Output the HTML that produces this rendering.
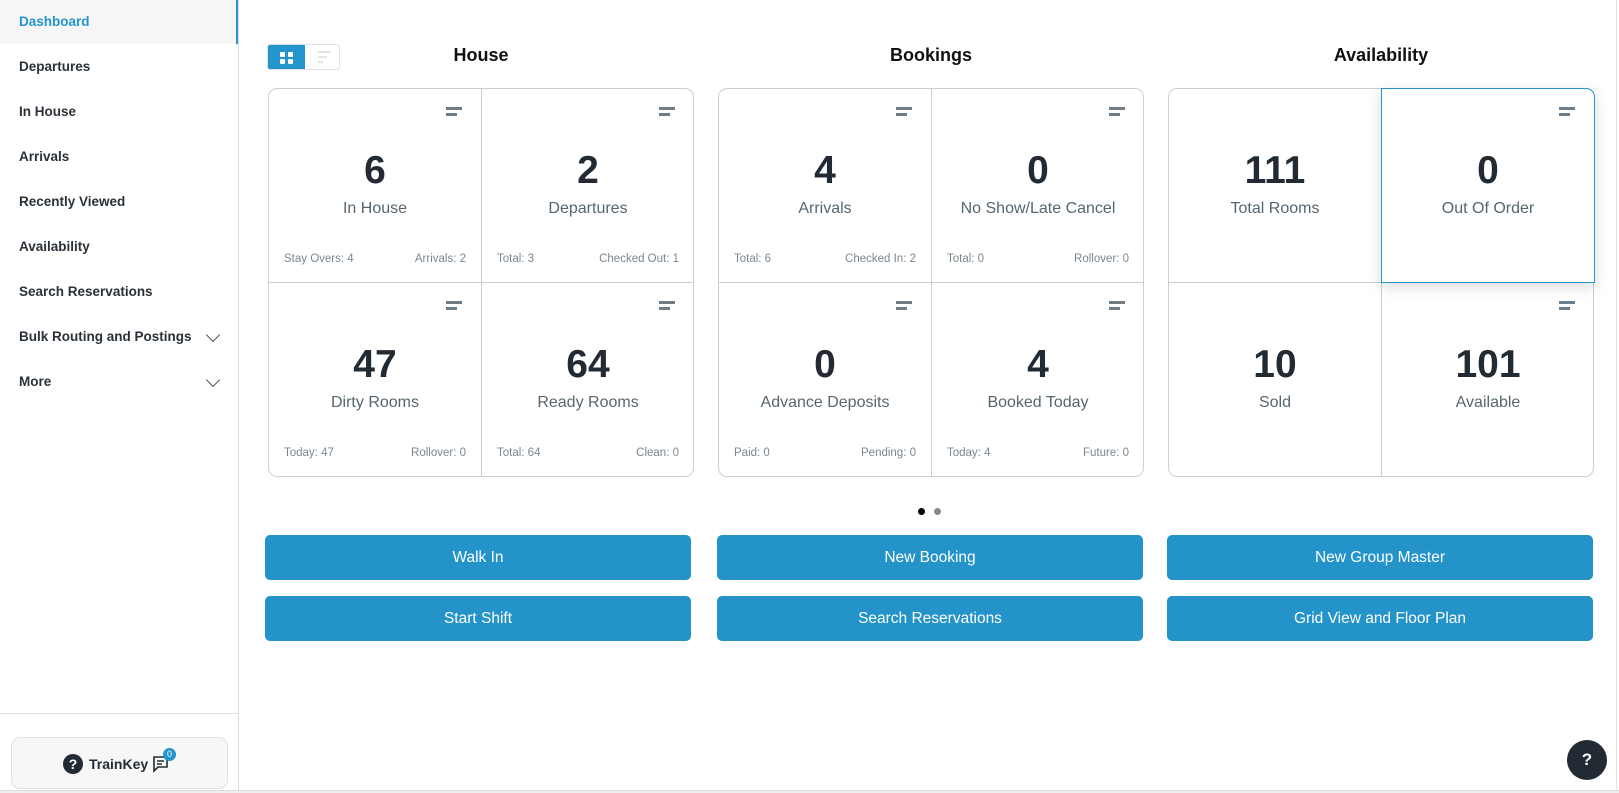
<!DOCTYPE html>
<html><head><meta charset="utf-8"><style>
*{box-sizing:border-box;margin:0;padding:0}
body{width:1619px;height:793px;overflow:hidden;background:#fff;font-family:"Liberation Sans",sans-serif;position:relative;color:#222b33}
.sb{position:absolute;left:0;top:0;width:239px;height:793px;border-right:1px solid #dcdfe2}
.it{position:absolute;left:0;width:238px;height:45px;line-height:45px;padding-left:19px;font-size:13.5px;font-weight:bold;color:#2a3138}
.it.act{background:#f6f6f6;color:#2394cc;border-right:2px solid #2394cc;height:44px;line-height:44px}
.chev{position:absolute;right:20px;top:16px;width:10px;height:10px;border-right:1.6px solid #4a5560;border-bottom:1.6px solid #4a5560;transform:rotate(45deg)}
.sfoot{position:absolute;left:0;top:713px;width:239px;border-top:1px solid #dcdfe2;height:80px}
.tk{position:absolute;left:11px;top:737px;width:217px;height:52px;border:1px solid #e0e3e6;border-radius:9px;background:#f7f7f7;font-weight:bold;font-size:14px;color:#222b33}
.tog{position:absolute;left:267px;top:44px;width:73px;height:26px;border:1px solid #dfe3e6;border-radius:3px;overflow:hidden}
.tog .a{position:absolute;left:0;top:0;width:37px;height:26px;background:#2394cc}
h2{position:absolute;top:45px;font-size:18px;font-weight:bold;color:#111;text-align:center;width:300px}
.card{position:absolute;top:88px;width:426px;height:389px;border:1px solid #c8d0d6;border-radius:9px}
.vl{position:absolute;left:212px;top:0;width:1px;height:100%;background:#c8d0d6}
.hl{position:absolute;top:193px;left:0;width:100%;height:1px;background:#c8d0d6}
.cell{position:absolute;width:212px;height:194px}
.num{position:absolute;top:60px;width:100%;text-align:center;font-size:39px;font-weight:bold;color:#222b33}
.lbl{position:absolute;top:111px;width:100%;text-align:center;font-size:16px;color:#56666f}
.fl,.fr{position:absolute;top:164px;font-size:11.5px;color:#7a8790}
.fl{left:15px}.fr{right:15px}
.ic{position:absolute;right:19px;top:18px;width:16px;height:9px}
.ic:before{content:"";position:absolute;left:0;top:0;width:16px;height:2.5px;background:#6f7d88}
.ic:after{content:"";position:absolute;left:0;top:6px;width:11px;height:2.5px;background:#6f7d88}
.btn{position:absolute;height:45px;border-radius:5px;background:#2393c9;color:#fff;font-size:15.5px;text-align:center;line-height:45px}
.dot{position:absolute;top:508px;width:7px;height:7px;border-radius:50%}
</style></head><body>
<div class="sb">
<div class="it act" style="top:0">Dashboard</div>
<div class="it" style="top:44px">Departures</div>
<div class="it" style="top:89px">In House</div>
<div class="it" style="top:134px">Arrivals</div>
<div class="it" style="top:179px">Recently Viewed</div>
<div class="it" style="top:224px">Availability</div>
<div class="it" style="top:269px">Search Reservations</div>
<div class="it" style="top:314px">Bulk Routing and Postings<span class="chev"></span></div>
<div class="it" style="top:359px">More<span class="chev"></span></div>
<div class="sfoot"></div>
<div class="tk">
<span style="position:absolute;left:51px;top:16px;width:20px;height:20px;border-radius:50%;background:#222b33;color:#fff;font-size:14px;text-align:center;line-height:20px">?</span>
<span style="position:absolute;left:77px;top:16px;line-height:20px">TrainKey</span>
<svg style="position:absolute;left:140px;top:17px" width="18" height="18" viewBox="0 0 18 18"><path d="M2 2h13v10H6l-4 4z" fill="none" stroke="#222b33" stroke-width="1.6"/><path d="M5 6h7M5 9h5" stroke="#222b33" stroke-width="1.4"/></svg>
<span style="position:absolute;left:151px;top:10px;width:13px;height:13px;border-radius:50%;background:#2394cc;color:#fff;font-size:9px;font-weight:normal;text-align:center;line-height:13px">0</span>
</div>
</div>

<div class="tog"><div class="a">
<svg style="position:absolute;left:12px;top:7px" width="13" height="12"><rect x="0" y="0" width="5" height="5" rx="1" fill="#fff"/><rect x="8" y="0" width="5" height="5" rx="1" fill="#fff"/><rect x="0" y="7" width="5" height="5" rx="1" fill="#fff"/><rect x="8" y="7" width="5" height="5" rx="1" fill="#fff"/></svg></div>
<svg style="position:absolute;left:50px;top:6px" width="14" height="13"><path d="M0 1h13M0 6h9M0 11h5" stroke="#c5ccd2" stroke-width="1"/></svg>
</div>

<h2 style="left:331px">House</h2>
<h2 style="left:781px">Bookings</h2>
<h2 style="left:1231px">Availability</h2>

<div class="card" style="left:268px"><div class="vl"></div><div class="hl"></div>
<div class="cell" style="left:0;top:0"><div class="ic"></div><div class="num">6</div><div class="lbl">In House</div><div class="fl">Stay Overs: 4</div><div class="fr">Arrivals: 2</div></div>
<div class="cell" style="left:213px;top:0"><div class="ic"></div><div class="num">2</div><div class="lbl">Departures</div><div class="fl">Total: 3</div><div class="fr">Checked Out: 1</div></div>
<div class="cell" style="left:0;top:194px"><div class="ic"></div><div class="num">47</div><div class="lbl">Dirty Rooms</div><div class="fl">Today: 47</div><div class="fr">Rollover: 0</div></div>
<div class="cell" style="left:213px;top:194px"><div class="ic"></div><div class="num">64</div><div class="lbl">Ready Rooms</div><div class="fl">Total: 64</div><div class="fr">Clean: 0</div></div>
</div>

<div class="card" style="left:718px"><div class="vl"></div><div class="hl"></div>
<div class="cell" style="left:0;top:0"><div class="ic"></div><div class="num">4</div><div class="lbl">Arrivals</div><div class="fl">Total: 6</div><div class="fr">Checked In: 2</div></div>
<div class="cell" style="left:213px;top:0"><div class="ic"></div><div class="num">0</div><div class="lbl">No Show/Late Cancel</div><div class="fl">Total: 0</div><div class="fr">Rollover: 0</div></div>
<div class="cell" style="left:0;top:194px"><div class="ic"></div><div class="num">0</div><div class="lbl">Advance Deposits</div><div class="fl">Paid: 0</div><div class="fr">Pending: 0</div></div>
<div class="cell" style="left:213px;top:194px"><div class="ic"></div><div class="num">4</div><div class="lbl">Booked Today</div><div class="fl">Today: 4</div><div class="fr">Future: 0</div></div>
</div>

<div class="card" style="left:1168px"><div class="vl"></div><div class="hl"></div>
<div class="cell" style="left:0;top:0"><div class="num">111</div><div class="lbl">Total Rooms</div></div>
<div class="cell" style="left:212px;top:-1px;width:214px;height:195px;border:1px solid #2394cc;border-radius:0 9px 0 0;background:#fff;box-shadow:0 4px 14px rgba(0,0,0,0.15)"><div class="ic"></div><div class="num">0</div><div class="lbl">Out Of Order</div></div>
<div class="cell" style="left:0;top:194px"><div class="num">10</div><div class="lbl">Sold</div></div>
<div class="cell" style="left:213px;top:194px"><div class="ic"></div><div class="num">101</div><div class="lbl">Available</div></div>
</div>

<div class="dot" style="left:918px;background:#000"></div>
<div class="dot" style="left:934px;background:#888"></div>

<div class="btn" style="left:265px;top:535px;width:426px">Walk In</div>
<div class="btn" style="left:717px;top:535px;width:426px">New Booking</div>
<div class="btn" style="left:1167px;top:535px;width:426px">New Group Master</div>
<div class="btn" style="left:265px;top:596px;width:426px">Start Shift</div>
<div class="btn" style="left:717px;top:596px;width:426px">Search Reservations</div>
<div class="btn" style="left:1167px;top:596px;width:426px">Grid View and Floor Plan</div>

<div style="position:absolute;left:1616px;top:0;width:1px;height:793px;background:#e3e3e3"></div>
<div style="position:absolute;left:0;top:790px;width:1619px;height:3px;background:#eee;border-top:1px solid #ddd"></div>
<div style="position:absolute;left:1567px;top:740px;width:40px;height:40px;border-radius:50%;background:#222b33;color:#fff;font-weight:bold;font-size:17px;text-align:center;line-height:40px">?</div>
</body></html>
